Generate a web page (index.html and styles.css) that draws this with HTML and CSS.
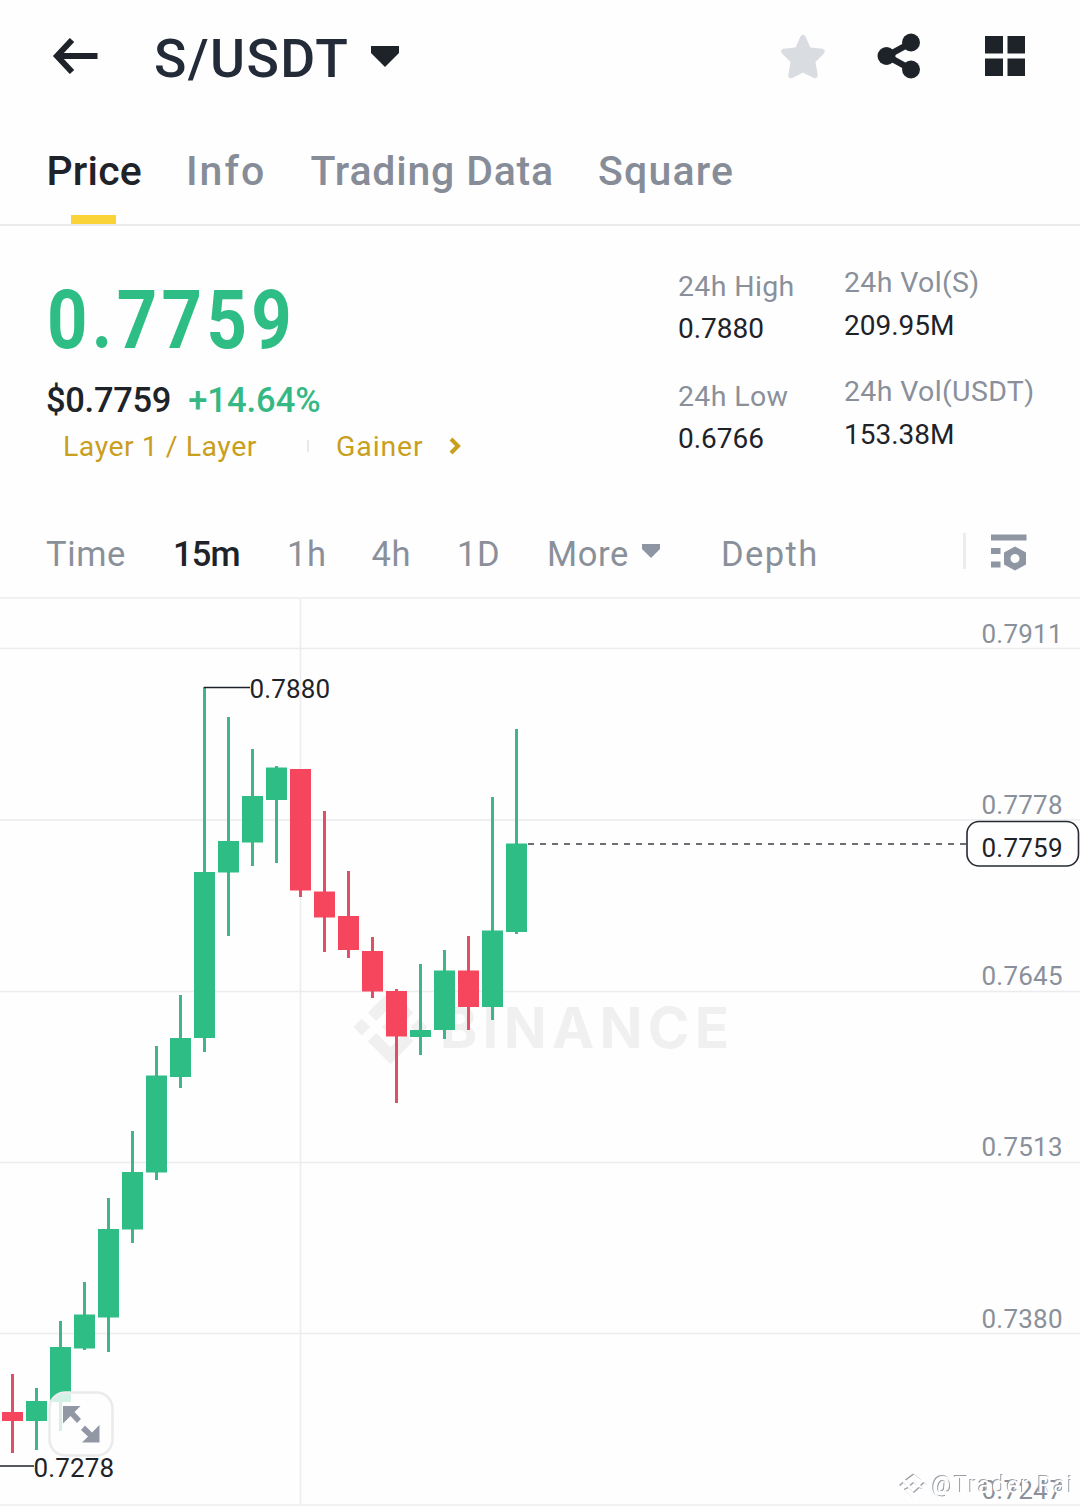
FILE: index.html
```html
<!DOCTYPE html>
<html lang="en">
<head>
<meta charset="utf-8">
<title>S/USDT</title>
<link rel="stylesheet" href="styles.css">
</head>
<body>
<header class="topbar">
  <svg class="back" width="46" height="36" viewBox="0 0 46 36"><path d="M45.500 18H6M20 2 5 18 20 34" fill="none" stroke="currentColor" stroke-width="6"/></svg>
  <h1 class="pair">S/USDT</h1>
  <svg class="pair-caret" width="28" height="21" viewBox="0 0 28 21"><path d="M0 0h28v7L14 21 0 7z" fill="currentColor"/></svg>
  <div class="actions">
    <svg width="46" height="46" viewBox="0 0 46 46"><path d="M23 4.500 28.500 17 42 18.500 32.500 28 35 42.500 23 36.500 11 42.500 13.500 28 4 18.500 17.500 17z" fill="#d9dce1" stroke="#d9dce1" stroke-width="5.500" stroke-linejoin="round"/></svg>
    <svg width="44" height="46" viewBox="0 0 44 46"><path d="M34.500 9.500 10 23l24.500 13.500" fill="none" stroke="currentColor" stroke-width="6.500"/><g fill="currentColor"><circle cx="34" cy="9.500" r="9"/><circle cx="9.500" cy="23" r="9"/><circle cx="34" cy="36.500" r="9"/></g></svg>
    <svg width="40" height="40" viewBox="0 0 40 40"><path d="M0 0h18v17.500H0zM22.500 0H40v17.500H22.500zM0 22.500h18V40H0zM22.500 22.500H40V40H22.500z" fill="currentColor"/></svg>
  </div>
</header>

<nav class="tabs">
  <a class="tab tab-active">Price</a>
  <a class="tab tab-info">Info</a>
  <a class="tab">Trading Data</a>
  <a class="tab tab-square">Square</a>
</nav>

<section class="summary">
  <div class="quote">
    <div class="last">0.7759</div>
    <div class="change"><span class="fiat">$0.7759</span><span class="up">+14.64%</span></div>
    <div class="tags">
      <span>Layer 1 / Layer</span>
      <i class="tag-sep"></i>
      <span class="gainer">Gainer</span>
      <svg width="12" height="18" viewBox="0 0 12 18"><path d="M2 2l7 7-7 7" fill="none" stroke="currentColor" stroke-width="4"/></svg>
    </div>
  </div>
  <dl class="stats stats-price">
    <div><dt>24h High</dt><dd>0.7880</dd></div>
    <div><dt>24h Low</dt><dd>0.6766</dd></div>
  </dl>
  <dl class="stats stats-volume">
    <div><dt>24h Vol(S)</dt><dd>209.95M</dd></div>
    <div><dt>24h Vol(USDT)</dt><dd>153.38M</dd></div>
  </dl>
</section>

<div class="intervals">
  <span>Time</span>
  <span class="interval-active">15m</span>
  <span>1h</span>
  <span>4h</span>
  <span>1D</span>
  <span class="more">More<svg width="18" height="14" viewBox="0 0 18 14"><path d="M0 0h18v5L9 14 0 5z" fill="#8f96a3"/></svg></span>
  <span class="depth">Depth</span>
  <div class="settings">
    <svg width="36" height="37" viewBox="0 0 36 37"><path d="M0 .5h35.500v6H0zM0 14h9.500v6H0zM0 27.500h9.500v6H0z" fill="#8f96a3"/><path fill-rule="evenodd" d="M24 12.500 35 18.500v12L24 36.500 13 30.500v-12zM24 20a4.500 4.500 0 1 0 0 9 4.500 4.500 0 0 0 0-9z" fill="#8f96a3"/></svg>
  </div>
</div>

<svg class="chart" width="1080" height="910" viewBox="0 597 1080 910">
  <g class="grid">
    <path d="M0 648.500H1080M0 820H1080M0 991.500H1080M0 1162.500H1080M0 1333.500H1080M300.500 598V1504"/>
    <path class="grid-edge" d="M0 598H1080M0 1505H1080"/>
  </g>
  <g class="brand">
    <path transform="translate(353.500 990) scale(.585)" d="M38.730 53.200l24.590-24.580 24.600 24.600 14.300-14.310L63.320 0 24.420 38.900zM0 63.310l14.300-14.310 14.310 14.310-14.310 14.300zM38.730 73.410l24.590 24.590 24.600-24.600 14.310 14.290-38.900 38.910-38.910-38.880zM98 63.310l14.300-14.310 14.310 14.300-14.310 14.320zM77.830 63.300L63.320 48.780 48.810 63.280l14.510 14.500z"/>
    <text x="440" y="1048" textLength="289">BINANCE</text>
  </g>
  <g class="wick-up"><path d="M36.500 1388V1450M60.500 1321V1431M84.500 1282V1350M108.500 1198V1352M132.500 1131V1243M156.500 1046V1180M180.500 995V1088M204.500 687V1052M228.500 717V936M252.500 749V866M276.500 766V863M420.500 964V1055M444.500 950V1039M492.500 797V1020M516.500 729V934"/></g>
  <g class="wick-down"><path d="M12.500 1374V1453M300.500 769V897M324.500 811V952M348.500 871V958M372.500 937V998M396.500 989V1103M468.500 936V1030"/></g>
  <g class="body-up"><path d="M36.500 1401V1421M60.500 1347V1402M84.500 1314.500V1348.500M108.500 1229V1317.500M132.500 1172V1229.500M156.500 1075.500V1172.500M180.500 1038V1077M204.500 872V1038M228.500 841V872.500M252.500 796V842.500M276.500 767.500V800M420.500 1030V1037M444.500 970.500V1030M492.500 930.500V1007M516.500 843.500V932"/></g>
  <g class="body-down"><path d="M12.500 1412V1421M300.500 769V890.500M324.500 891.500V917.500M348.500 916V950M372.500 951V991.500M396.500 991V1036.500M468.500 970.500V1007"/></g>

  <g class="callout">
    <path d="M204 687.500H250M0 1466H34"/>
    <text x="249.500" y="697.500" textLength="80.500">0.7880</text>
    <text x="33.500" y="1476.500" textLength="80.500">0.7278</text>
  </g>
  <path class="last-line" d="M528 844H966"/>
  <g class="axis">
    <text x="981.500" y="642.500" textLength="81">0.7911</text>
    <text x="981.500" y="813.500" textLength="81">0.7778</text>
    <text x="981.500" y="985" textLength="81">0.7645</text>
    <text x="981.500" y="1156" textLength="81">0.7513</text>
    <text x="981.500" y="1327.500" textLength="81">0.7380</text>
    <text x="981.500" y="1499" textLength="81">0.7247</text>
  </g>
  <rect class="last-tag" x="967" y="821.500" width="111.500" height="44.500" rx="12"/>
  <text class="last-value" x="981.500" y="857" textLength="81">0.7759</text>

  <g class="expand">
    <rect x="49.500" y="1392.500" width="63" height="63" rx="16"/>
    <path d="M63 1406h17.500l-6 6 6.500 7-4 4-6.500-7-7.500 7.500zM99.500 1442.500H82l6-6-7-6.500 4-4.500 7 7 7.500-7.500z"/>
  </g>

  <g class="credit">
    <path d="M906 1480.500 914 1474.500 922 1480.500 918 1484 914 1480.500 910 1484zM900 1486l3.500-3 3.500 3-3.500 3zM921 1486l3.500-3 3.500 3-3.500 3zM910.500 1486l3.500-3 3.500 3-3.500 3zM904.500 1490l4-2 5.500 5 5.500-5 4 2-9.500 8.500z"/>
    <text x="932" y="1493" textLength="141">@Trader Rai</text>
  </g>
</svg>
</body>
</html>
```

FILE: styles.css
```css
* { box-sizing: border-box; }

body {
  margin: 0;
  width: 1080px;
  height: 1507px;
  overflow: hidden;
  background: #fefefe;
  color: #1e2329;
  font-family: Roboto, "Liberation Sans", sans-serif;
}

svg { display: block; flex: none; }

/* Header */
.topbar {
  display: flex;
  align-items: center;
  height: 112px;
  padding: 0 55px 0 52px;
}
.pair {
  margin: 0 0 0 56px;
  padding-top: 5px;
  width: 217px;
  font-size: 53.5px;
  font-weight: 500;
  line-height: 64px;
  letter-spacing: 1.4px;
  color: #242b38;
}
.actions {
  display: flex;
  align-items: center;
  gap: 64px;
  margin-left: auto;
}
.actions svg:first-child { margin-right: -13px; }

/* Section tabs */
.tabs {
  display: grid;
  grid-template-columns: 139.5px 124.5px 287.5px auto;
  height: 114px;
  padding-left: 46.5px;
  border-bottom: 2px solid #ebebec;
}
.tab {
  position: relative;
  height: 112px;
  font-size: 41px;
  font-weight: 500;
  line-height: 118px;
  letter-spacing: 0.8px;
  color: #878d98;
}
.tab-info { letter-spacing: 2px; }
.tab-square { letter-spacing: 1.2px; }
.tab-active { color: #1e2329; letter-spacing: 0.2px; }
.tab-active::after {
  content: "";
  position: absolute;
  left: 24.5px;
  bottom: 0;
  width: 45px;
  height: 9px;
  background: #fad338;
}

/* Quote and 24h statistics */
.summary {
  display: grid;
  grid-template-columns: 632px 166px auto;
  height: 284px;
  padding-left: 46px;
}
.quote { padding-top: 44px; }
.last {
  height: 100px;
  font-size: 82px;
  font-weight: 700;
  line-height: 101px;
  letter-spacing: 5.1px;
  color: #2ebd85;
  transform: translateX(1px) scaleX(0.86);
  transform-origin: left;
}
.change {
  display: flex;
  gap: 17px;
  margin-top: 8px;
  font-size: 34.5px;
  font-weight: 500;
  line-height: 44px;
}
.fiat { letter-spacing: -0.3px; }
.up { color: #36b885; }
.tags {
  display: flex;
  align-items: center;
  margin-top: 4px;
  padding-left: 17px;
  font-size: 28.5px;
  line-height: 41px;
  letter-spacing: 0.5px;
  color: #c99f1e;
}
.tags svg { margin-bottom: 2px; }
.tag-sep {
  width: 2px;
  height: 12px;
  margin: 0 27px 2px 50px;
  background: #e8e9eb;
}
.gainer { margin-right: 25px; letter-spacing: 0.9px; }
.stats {
  display: flex;
  flex-direction: column;
  margin: 0;
  font-size: 28.5px;
  line-height: 42.5px;
}
.stats dt { color: #8a909a; letter-spacing: 0.35px; }
.stats dd { margin: 0; font-size: 28px; }
.stats-price { gap: 25px; padding-top: 39.5px; }
.stats-volume { gap: 24px; padding-top: 36px; }

/* Chart intervals */
.intervals {
  display: grid;
  grid-template-columns: 127px 114px 84.5px 85.5px 90px 174px 242px auto;
  height: 87px;
  padding-left: 46px;
  font-size: 34.5px;
  line-height: 89px;
  letter-spacing: 0.6px;
  color: #8a909a;
}
.interval-active { color: #1e2329; font-weight: 500; letter-spacing: -0.8px; }
.more { display: flex; gap: 13px; }
.more svg { margin-top: 34px; }
.depth { letter-spacing: 1.4px; }
.settings {
  height: 36px;
  margin-top: 23px;
  padding-left: 25px;
  border-left: 3px solid #ececef;
}
.settings svg { margin-top: 1px; }

/* Candlestick chart */
.chart { font-size: 26px; }
.grid path { fill: none; stroke: #ececee; stroke-width: 1.5; }
.grid .grid-edge { stroke: #f1f1f2; stroke-width: 2; }
.brand { fill: #f0f0f1; font-family: Inter, sans-serif; font-size: 56.5px; font-weight: 700; }
.wick-up { stroke: #3fb588; stroke-width: 3; }
.wick-down { stroke: #e04f68; stroke-width: 3; }
.body-up { stroke: #2ebd85; stroke-width: 21; }
.body-down { stroke: #f6465d; stroke-width: 21; }
.callout { fill: #1e2329; }
.callout path { stroke: #1e2329; stroke-width: 1.5; }
.last-line { stroke: #3c4046; stroke-width: 1.7; stroke-dasharray: 6 6; }
.axis { fill: #8a909a; }
.last-tag { fill: #fefefe; stroke: #252a33; stroke-width: 1.6; }
.last-value { fill: #1e2329; }
.expand rect { fill: #fefefe; fill-opacity: 0.8; stroke: #e9ebec; stroke-width: 2.6; }
.expand path { fill: #9197a4; }
.credit {
  fill: #fff;
  font-size: 23px;
  filter: drop-shadow(-0.6px -0.6px 0.4px #9a9fa7);
}
```
